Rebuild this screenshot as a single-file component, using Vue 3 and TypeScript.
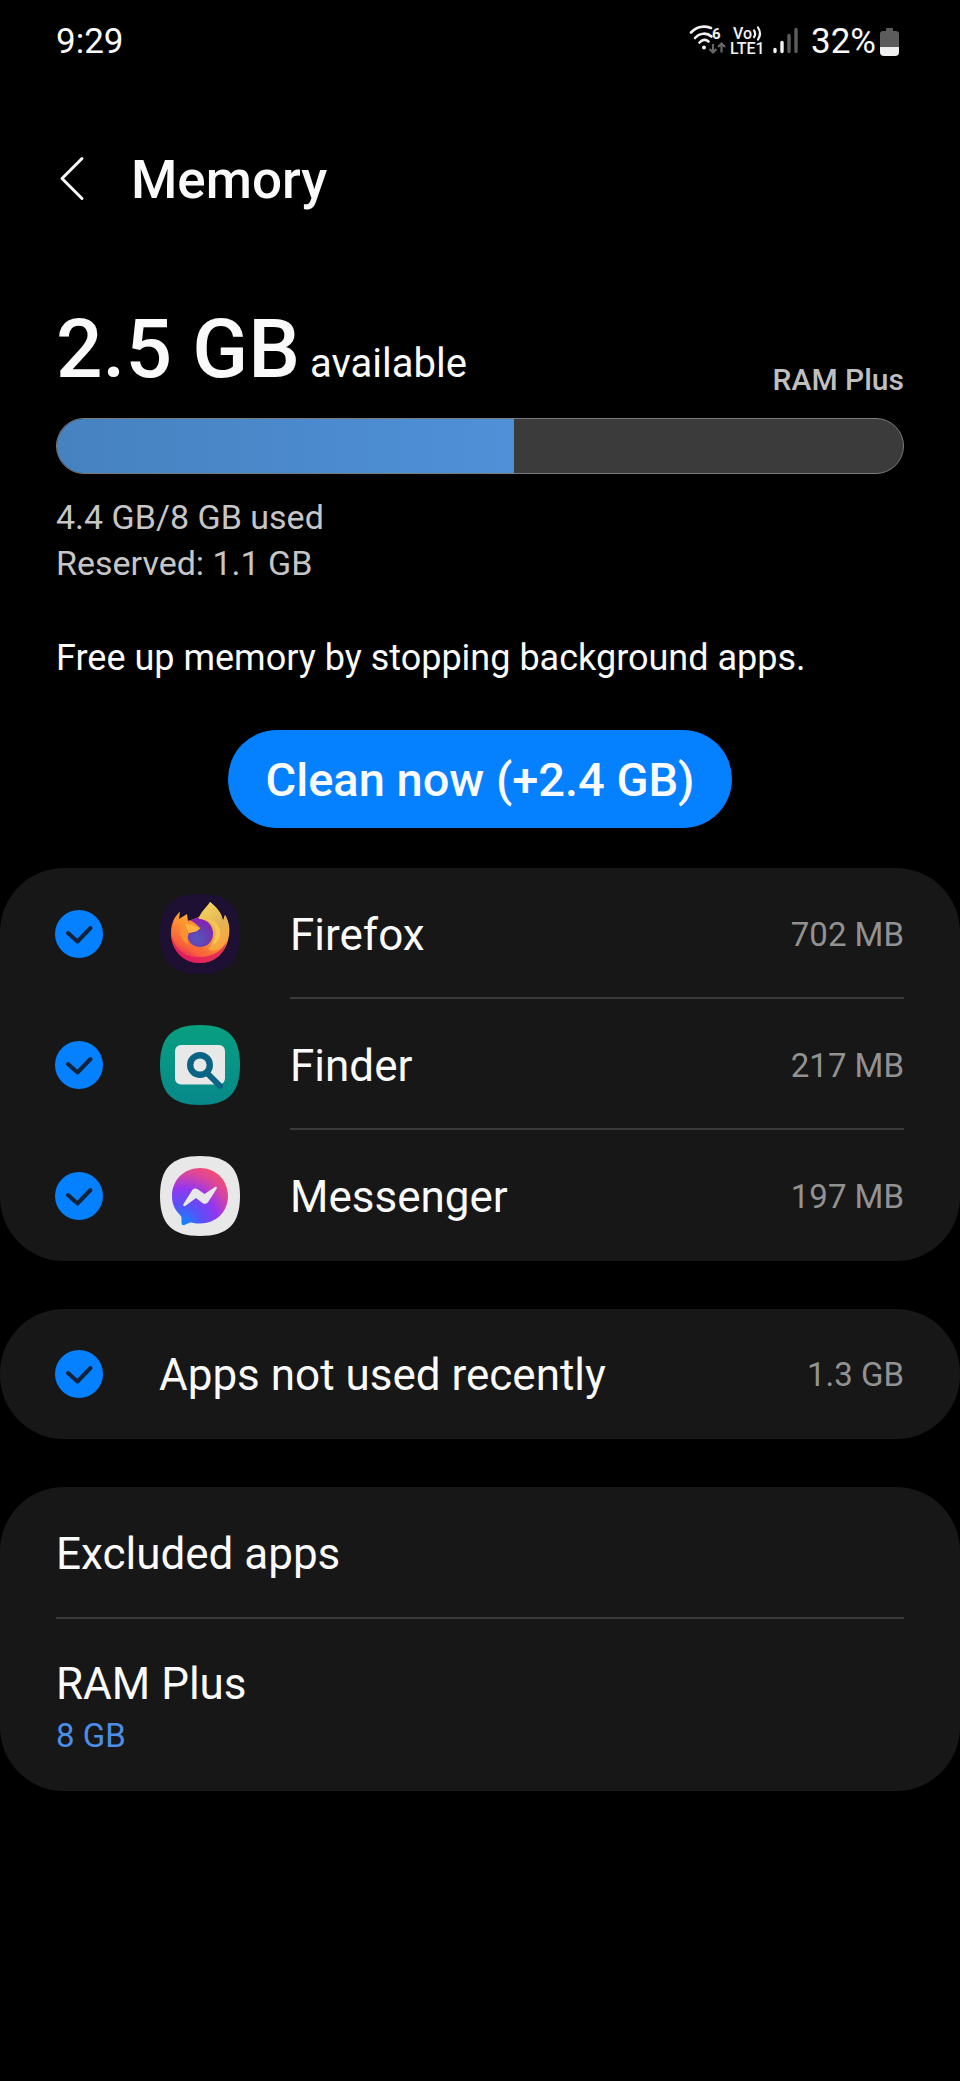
<script setup lang="ts">
import { computed, ref } from 'vue'

interface RunningApp {
  id: string
  name: string
  size: string
  checked: boolean
}

const apps = ref<RunningApp[]>([
  { id: 'firefox', name: 'Firefox', size: '702 MB', checked: true },
  { id: 'finder', name: 'Finder', size: '217 MB', checked: true },
  { id: 'messenger', name: 'Messenger', size: '197 MB', checked: true },
])
const unusedChecked = ref(true)

const usedShare = ref(0.54)
const fillStyle = computed(() => ({ width: `${usedShare.value * 100}%` }))
</script>

<template>
  <div class="screen">
    <div class="status">
      <span class="status-text">9:29</span>
      <div class="status-right">
        <svg class="network" viewBox="0 0 116 36" aria-hidden="true">
          <g fill="none" stroke="#f2f2f2" stroke-width="2.6" stroke-linecap="round">
            <path d="M4 8.500C10 2.500 17 1.500 24 4" />
            <path d="M8 14C13 8.500 20 8.500 24.500 12.500" />
            <path d="M12.500 18.500C15.500 15.200 19 15.200 21.500 17.500" />
          </g>
          <circle cx="17" cy="23.400" r="2" fill="#f2f2f2" />
          <text x="25" y="15" font-size="15" font-weight="700" fill="#f2f2f2">6</text>
          <g fill="none" stroke="#666" stroke-width="2.200">
            <path d="M26 20V28M22.500 25L26 28.500L29.500 25" />
            <path d="M34.500 28.500V19.500M31 23L34.500 19.500L38 23" />
          </g>
          <text x="46" y="14.500" font-size="16" font-weight="500" fill="#f2f2f2">Vo</text>
          <g fill="none" stroke="#f2f2f2" stroke-width="2.200" stroke-linecap="round">
            <path d="M67 6.500Q69.300 9.800 67 13.200" />
            <path d="M71 3.500Q75 9.500 71 15.500" />
          </g>
          <text x="43" y="29.500" font-size="16" font-weight="500" fill="#f2f2f2">LTE1</text>
          <g stroke-width="3.400" stroke-linecap="round">
            <path d="M88 25.500V27.500M95 18.500V27.500" stroke="#f2f2f2" />
            <path d="M102 11.500V27.500M109 5.500V27.500" stroke="#5c5c5c" />
          </g>
        </svg>
        <span class="status-text">32%</span>
        <svg class="battery" viewBox="0 0 20 30" aria-hidden="true">
          <path d="M7 1H12Q13 1 13 2V4H16Q19 4 19 7V20H0V7Q0 4 3 4H6V2Q6 1 7 1Z" fill="#5c5c5c" />
          <path d="M0 20H19V25Q19 29 15 29H4Q0 29 0 25Z" fill="#efefef" />
        </svg>
      </div>
    </div>

    <header class="header">
      <button class="back" type="button" aria-label="Back">
        <svg viewBox="0 0 28 48" aria-hidden="true">
          <path d="M23 2.500L3 22.500L23 42.500" fill="none" stroke="#fafafa" stroke-width="3" stroke-linecap="round" stroke-linejoin="round" />
        </svg>
      </button>
      <h1>Memory</h1>
    </header>

    <main>
      <section class="summary">
        <div class="headline">
          <p class="free"><strong>2.5 GB</strong> available</p>
          <span class="plus">RAM Plus</span>
        </div>
        <div class="bar"><div class="bar-fill" :style="fillStyle"></div></div>
        <p class="usage">4.4 GB/8 GB used<br />Reserved: 1.1 GB</p>
        <p class="hint">Free up memory by stopping background apps.</p>
        <button class="clean" type="button">Clean now (+2.4 GB)</button>
      </section>

      <ul class="card">
        <li v-for="app in apps" :key="app.id">
          <label class="row">
            <span class="check">
              <input v-model="app.checked" type="checkbox" />
              <svg viewBox="0 0 48 48" aria-hidden="true"><path d="M13 23L22.500 31.500L35.500 18" /></svg>
            </span>
            <svg v-if="app.id === 'firefox'" class="app-icon" viewBox="0 0 80 80" aria-hidden="true">
              <defs>
                <linearGradient id="fx-body" x1="0.800" y1="0.100" x2="0.300" y2="1">
                  <stop offset="0" stop-color="#ffd54a" />
                  <stop offset="0.450" stop-color="#fb9a32" />
                  <stop offset="0.800" stop-color="#f8603a" />
                  <stop offset="1" stop-color="#e01567" />
                </linearGradient>
                <linearGradient id="fx-flame" x1="0.300" y1="0" x2="0.700" y2="1">
                  <stop offset="0" stop-color="#f4d75c" />
                  <stop offset="0.500" stop-color="#e3b257" />
                  <stop offset="1" stop-color="#fba43a" />
                </linearGradient>
                <radialGradient id="fx-globe" cx="0.400" cy="0.700" r="0.750">
                  <stop offset="0" stop-color="#5756bd" />
                  <stop offset="0.600" stop-color="#6a3bb2" />
                  <stop offset="1" stop-color="#8a20b4" />
                </radialGradient>
              </defs>
              <path d="M40 0C68 0 80 12 80 40S68 80 40 80S0 68 0 40S12 0 40 0Z" fill="#1d1032" />
              <path d="M20 17.500L19 25L27 20L28 27C31 26 34 25 37 24L40 22C46 17 49 13 50 8C56 13 60 17 62 23L63 27L65 21C69 28 70 34 69 41C67 58 55 69 40 69C23 69 11 56 11 39C11 30 14 23 20 17.500Z" fill="url(#fx-body)" />
              <path d="M12 43C16 57 27 64 40 63C53 63 63 56 67 47C64 61 54 69 40 69C24 69 13 58 12 43Z" fill="#df1a60" opacity="0.750" />
              <path d="M28 29C34 22 48 21 54 31V40H40Z" fill="#8c23ae" />
              <circle cx="40" cy="40" r="13" fill="url(#fx-globe)" />
              <path d="M50 8C57 14 60 18 62 24L63 27L65 21C69 28 70 36 67 44C63 55 55 59 48 55C54 50 55 40 51 32C48 27 44 25 39 25C40 18 46 14 50 8Z" fill="url(#fx-flame)" />
              <path d="M44 25C54 27 60 38 52 51C60 49 64 37 56 29C53 26 48 24 44 25Z" fill="#fac451" />
              <path d="M28 27C32 26 36 30 40 34C38 38 33 38 29 39C27 43 27 47 29 51C18 45 17 31 28 27Z" fill="#fa9131" />
              <path d="M25 29C31 31 36 32 40 34C38 38 32 38 29 39C27 35 26 32 25 29Z" fill="#ffb23e" />
            </svg>
            <svg v-else-if="app.id === 'finder'" class="app-icon" viewBox="0 0 80 80" aria-hidden="true">
              <defs>
                <linearGradient id="finder-bg" x1="0" y1="0" x2="0" y2="1">
                  <stop offset="0" stop-color="#089f80" />
                  <stop offset="1" stop-color="#07888a" />
                </linearGradient>
              </defs>
              <path d="M40 0C68 0 80 12 80 40S68 80 40 80S0 68 0 40S12 0 40 0Z" fill="url(#finder-bg)" />
              <rect x="15" y="20" width="50" height="39.500" rx="6" fill="#e8e8e8" />
              <circle cx="40" cy="40" r="9.800" fill="none" stroke="#0c6484" stroke-width="6.400" />
              <path d="M47 48L60 61" stroke="#0c6484" stroke-width="6" stroke-linecap="round" />
            </svg>
            <svg v-else class="app-icon" viewBox="0 0 80 80" aria-hidden="true">
              <defs>
                <radialGradient id="msg-bg" gradientUnits="userSpaceOnUse" cx="22" cy="69" r="64">
                  <stop offset="0" stop-color="#0b8dff" />
                  <stop offset="0.300" stop-color="#5552f8" />
                  <stop offset="0.580" stop-color="#9636ee" />
                  <stop offset="0.800" stop-color="#d8459f" />
                  <stop offset="1" stop-color="#f5506c" />
                </radialGradient>
              </defs>
              <path d="M40 0C68 0 80 12 80 40S68 80 40 80S0 68 0 40S12 0 40 0Z" fill="#e8e8e8" />
              <path d="M40 12C24 12 12 24 12 40C12 48 15 54 20 59C21 60 21.500 61 21.500 62V67C21.500 69 23 69.500 24.500 69L30 66.500C33 67 36 67.500 40 67.500C56 67.500 68 56 68 40S56 12 40 12Z" fill="url(#msg-bg)" />
              <path d="M23.500 48L32 34.500C33.500 32 36 32 38 33.500L44.500 38L55 31C56.500 30 57.500 31.500 56.500 33L48.500 45.500C47 48 44.500 48.500 42.500 47L36 42L25.500 49.800C24 51 22.500 49.500 23.500 48Z" fill="#e8e8e8" />
            </svg>
            <span class="row-main">
              <span class="title">{{ app.name }}</span>
              <span class="size">{{ app.size }}</span>
            </span>
          </label>
        </li>
      </ul>

      <div class="card">
        <label class="row unused-row">
          <span class="check">
            <input v-model="unusedChecked" type="checkbox" />
            <svg viewBox="0 0 48 48" aria-hidden="true"><path d="M13 23L22.500 31.500L35.500 18" /></svg>
          </span>
          <span class="title">Apps not used recently</span>
          <span class="size">1.3 GB</span>
        </label>
      </div>

      <div class="card">
        <button class="link" type="button"><span class="title">Excluded apps</span></button>
        <button class="link tall" type="button">
          <span class="title">RAM Plus</span>
          <span class="value">8 GB</span>
        </button>
      </div>
    </main>
  </div>
</template>

<style>
body {
  margin: 0;
  background: #000;
}
</style>

<style scoped>
.screen {
  box-sizing: border-box;
  min-height: 100vh;
  background: #000;
  color: #fafafa;
  font-family: Roboto, "Liberation Sans", sans-serif;
}

.screen * {
  box-sizing: border-box;
}

button {
  margin: 0;
  border: 0;
  background: none;
  color: inherit;
  font: inherit;
}

.status {
  display: flex;
  justify-content: space-between;
  align-items: center;
  height: 84px;
  padding: 0 60px 0 56px;
}

.status-text {
  font-size: 35px;
  line-height: 40px;
}

.status-right {
  display: flex;
  align-items: center;
}

.network {
  width: 116px;
  height: 36px;
  margin-right: 8px;
}

.battery {
  width: 20px;
  height: 30px;
  margin-left: 4px;
}

.header {
  display: flex;
  align-items: center;
  gap: 44px;
  height: 192px;
  padding: 0 56px;
}

.back {
  display: flex;
  padding: 0 0 0 3px;
}

.back svg {
  width: 28px;
  height: 48px;
}

h1 {
  margin: 0;
  font-size: 53px;
  line-height: 64px;
  font-weight: 500;
}

.summary {
  display: flex;
  flex-direction: column;
  padding: 25px 56px 40px;
}

.headline {
  display: flex;
  justify-content: space-between;
  align-items: flex-end;
}

p {
  margin: 0;
}

.free {
  padding-bottom: 6px;
  font-size: 40px;
  line-height: 96px;
}

.free strong {
  font-size: 82px;
  font-weight: 500;
}

.plus {
  padding-bottom: 20px;
  font-size: 30px;
  line-height: 36px;
  font-weight: 500;
  color: #bfbfbf;
}

.bar {
  height: 56px;
  border: 1px solid #7a7a7a;
  border-radius: 28px;
  background: #3b3b3b;
  overflow: hidden;
}

.bar-fill {
  height: 100%;
  background: linear-gradient(90deg, #4682c0, #4f90d8);
}

.usage {
  margin-top: 20px;
  font-size: 34px;
  line-height: 46px;
  color: #c6c6c6;
}

.hint {
  margin-top: 50px;
  font-size: 36px;
  line-height: 44px;
}

.clean {
  align-self: center;
  height: 98px;
  margin-top: 50px;
  padding: 0 37px;
  border-radius: 49px;
  background: #0581ff;
  font-size: 47px;
  font-weight: 500;
}

.card {
  margin: 0 0 48px;
  padding: 0;
  border-radius: 64px;
  background: #171717;
  list-style: none;
  overflow: hidden;
}

.row {
  display: flex;
  align-items: center;
  height: 131px;
  padding: 0 56px 0 55px;
}

.unused-row {
  height: 130px;
}

.check {
  display: grid;
  flex: none;
  width: 48px;
  height: 48px;
}

.check input,
.check svg {
  grid-area: 1 / 1;
  width: 48px;
  height: 48px;
  margin: 0;
}

.check input {
  appearance: none;
  border: 3px solid #808080;
  border-radius: 50%;
}

.check input:checked {
  border: 0;
  background: #0581ff;
}

.check svg {
  visibility: hidden;
  pointer-events: none;
  fill: none;
  stroke: #11233a;
  stroke-width: 4;
  stroke-linecap: round;
  stroke-linejoin: round;
}

.check input:checked + svg {
  visibility: visible;
}

.app-icon {
  flex: none;
  width: 80px;
  height: 80px;
  margin: 0 50px 0 57px;
}

.row-main {
  display: flex;
  flex: 1;
  align-items: center;
  align-self: stretch;
  padding-top: 2px;
  border-bottom: 2px solid #3a3a3a;
}

li:last-child .row-main {
  border-bottom-color: transparent;
}

.title {
  flex: 1;
  padding-top: 2px;
  font-size: 44px;
  line-height: 52px;
}

.size {
  padding-top: 2px;
  font-size: 33px;
  line-height: 40px;
  color: #929292;
}

.unused-row .title {
  margin-left: 56px;
}

.link {
  display: flex;
  flex-direction: column;
  justify-content: center;
  width: calc(100% - 112px);
  height: 130px;
  margin: 0 56px;
  padding: 2px 0 0;
  text-align: left;
}

.link .title {
  flex: none;
}

.link + .link {
  border-top: 2px solid #3a3a3a;
}

.tall {
  height: 174px;
  padding-top: 8px;
}

.value {
  font-size: 33px;
  line-height: 52px;
  color: #4b8ee6;
}
</style>
